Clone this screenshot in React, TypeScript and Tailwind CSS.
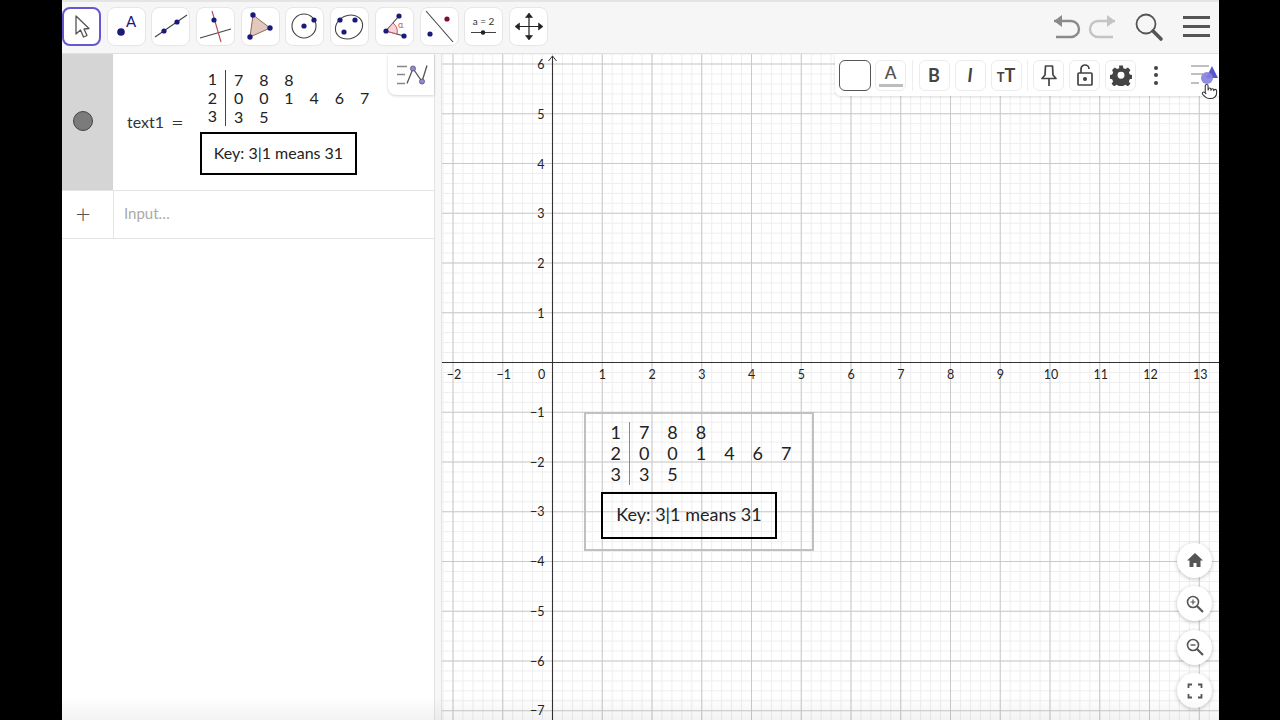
import type { ReactNode } from "react"
import { Pointer } from "lucide-react"

const NAVY = "#1a1a7a"
const ORIGIN_X = 110.5
const ORIGIN_Y = 308.5
const UNIT = 49.75

const stems = [
  { stem: "1", leaves: ["7", "8", "8"] },
  { stem: "2", leaves: ["0", "0", "1", "4", "6", "7"] },
  { stem: "3", leaves: ["3", "5"] },
]

function Dot({ x, y, r = 3.4, fill = NAVY }: { x: number; y: number; r?: number; fill?: string }) {
  return <circle cx={x} cy={y} r={r} fill={fill} />
}

const tools: ReactNode[] = [
  <path key="move" d="M14 9 L14 27 L18.5 23 L21.5 30 L25 28.5 L22 22 L27 21.5 Z" fill="white" stroke="#555" strokeWidth="1.3" strokeLinejoin="round" />,
  <g key="point">
    <Dot x={14} y={25} r={3.8} />
    <text x={19} y={20} fontSize="15" fill={NAVY}>A</text>
  </g>,
  <g key="line">
    <line x1="4" y1="30" x2="36" y2="8" stroke="#444" strokeWidth="1.1" />
    <Dot x={13} y={24} r={2.6} />
    <Dot x={26} y={15} r={2.6} />
  </g>,
  <g key="perp">
    <line x1="4" y1="31" x2="35" y2="22" stroke="#444" strokeWidth="1.1" />
    <line x1="16" y1="4" x2="25" y2="35" stroke="#b5485a" strokeWidth="1.1" />
    <Dot x={18} y={13} r={2.6} />
  </g>,
  <g key="polygon">
    <path d="M12 8 L29 21 L9 30 Z" fill="#e3c9bd" stroke="#8d6a5c" strokeWidth="1" />
    <Dot x={12} y={8} r={2.7} />
    <Dot x={29} y={21} r={2.7} />
    <Dot x={9} y={30} r={2.7} />
  </g>,
  <g key="circle">
    <circle cx="19" cy="19" r="12" fill="none" stroke="#444" strokeWidth="1.1" />
    <Dot x={19} y={19} r={2.6} />
    <Dot x={29} y={13} r={2.6} />
  </g>,
  <g key="ellipse">
    <ellipse cx="19" cy="20" rx="14" ry="11.5" transform="rotate(-25 19 20)" fill="none" stroke="#444" strokeWidth="1.1" />
    <Dot x={10} y={13} r={2.6} />
    <Dot x={25} y={13} r={2.6} />
    <Dot x={14} y={25} r={2.6} />
  </g>,
  <g key="angle">
    <path d="M24 9 L11 24 L29 29" fill="none" stroke="#444" strokeWidth="1.1" />
    <path d="M11 24 L18 16 A11 11 0 0 1 22 27 Z" fill="#f3d6d6" stroke="#c9525f" strokeWidth="1" />
    <text x={23} y={21} fontSize="9" fill="#c9525f">α</text>
    <Dot x={11} y={24} r={2.6} />
    <Dot x={24} y={9} r={2.6} />
    <Dot x={29} y={29} r={2.6} />
  </g>,
  <g key="reflect">
    <line x1="6" y1="4" x2="33" y2="35" stroke="#444" strokeWidth="1.1" />
    <Dot x={27} y={12} r={2.6} fill="#7a1030" />
    <Dot x={10} y={27} r={2.6} />
  </g>,
  <g key="slider">
    <text x={19.5} y={18} fontSize="10" fill="#333" textAnchor="middle">a = 2</text>
    <line x1="7" y1="25.5" x2="32" y2="25.5" stroke="#444" strokeWidth="1" />
    <circle cx="19" cy="25.5" r="2.3" fill="#222" />
  </g>,
  <g key="pan" stroke="#222" fill="#222">
    <path d="M20 8 V31 M8 19.5 H32" strokeWidth="1.2" />
    <path d="M20 6 L16.5 10.5 H23.5 Z M20 33 L16.5 28.5 H23.5 Z M6 19.5 L10.5 16 V23 Z M34 19.5 L29.5 16 V23 Z" strokeWidth="0.6" />
  </g>,
]

function ToolButton({ active, children }: { active?: boolean; children: ReactNode }) {
  return (
    <div
      className={
        active
          ? "h-[39px] w-[39px] shrink-0 rounded-lg border-2 border-[#6557d2] bg-white"
          : "h-[39px] w-[39px] shrink-0 rounded-lg border border-[#e6e6e6] bg-white"
      }
    >
      <svg viewBox={active ? "2 2 35 35" : "1 1 37 37"} className="h-full w-full">{children}</svg>
    </div>
  )
}

function StemLeaf({ big }: { big?: boolean }) {
  const rowClass = big ? "flex h-[21px] items-center" : "flex h-[18.5px] items-center"
  const stemClass = big
    ? "w-[29px] shrink-0 border-r border-[#888] pr-[8px] text-right leading-[21px]"
    : "w-[26px] shrink-0 border-r border-[#444] pr-[8px] text-right leading-[18.5px]"
  const leafClass = big ? "w-[28.4px] shrink-0 text-center" : "w-[25.2px] shrink-0 text-center"
  return (
    <div className={big ? "text-[18px] text-[#222]" : "text-[16px] text-[#222]"}>
      {stems.map((row) => (
        <div key={row.stem} className={rowClass}>
          <div className={stemClass}>{row.stem}</div>
          {row.leaves.map((leaf, index) => (
            <div key={index} className={leafClass}>{leaf}</div>
          ))}
        </div>
      ))}
    </div>
  )
}

function xLabelPos(v: number) {
  if (v === 0) return ORIGIN_X - 11
  if (v < 0 || v >= 10) return ORIGIN_X + v * UNIT + 1
  return ORIGIN_X + v * UNIT
}

function Graph() {
  const xs = Array.from({ length: 16 }, (_, i) => i - 2)
  const ys = Array.from({ length: 14 }, (_, i) => 6 - i)
  return (
    <svg width="777" height="666" className="block">
      {Array.from({ length: 90 }, (_, i) => i - 15).map((i) => {
        const x = ORIGIN_X + (i * UNIT) / 5
        return <line key={i} x1={x} y1="0" x2={x} y2="666" stroke="#eeeeee" />
      })}
      {Array.from({ length: 70 }, (_, i) => i - 35).map((i) => {
        const y = ORIGIN_Y + (i * UNIT) / 5
        return <line key={i} x1="0" y1={y} x2="777" y2={y} stroke="#eeeeee" />
      })}
      {xs.map((v) => {
        const x = ORIGIN_X + v * UNIT
        return <line key={v} x1={x} y1="0" x2={x} y2="666" stroke="#c9c9c9" />
      })}
      {ys.map((v) => {
        const y = ORIGIN_Y - v * UNIT
        return <line key={v} x1="0" y1={y} x2="777" y2={y} stroke="#c9c9c9" />
      })}
      <line x1={ORIGIN_X} y1="2" x2={ORIGIN_X} y2="666" stroke="#333" strokeWidth="1.1" />
      <line x1="0" y1={ORIGIN_Y} x2="777" y2={ORIGIN_Y} stroke="#333" strokeWidth="1.1" />
      <path d="M106.5 7 L110.5 2 L114.5 7" fill="none" stroke="#333" />
      {xs.filter((v) => v !== 14).map((v) => (
        <text key={v} x={xLabelPos(v)} y={ORIGIN_Y + 16} fontSize="12.5" fill="#222" textAnchor="middle">
          {v < 0 ? "−" + -v : v}
        </text>
      ))}
      {ys.filter((v) => v !== 0).map((v) => (
        <text key={v} x={ORIGIN_X - 8} y={ORIGIN_Y - v * UNIT + (v > 0 ? 5 : 4.5)} fontSize="12.5" fill="#222" textAnchor="end">
          {v < 0 ? "−" + -v : v}
        </text>
      ))}
    </svg>
  )
}

function StyleButton({ children, dark }: { children?: ReactNode; dark?: boolean }) {
  return (
    <div
      className={
        dark
          ? "flex h-[31px] w-[32px] shrink-0 items-center justify-center rounded-md border border-[#555] bg-white"
          : "flex h-[31px] w-[31px] shrink-0 items-center justify-center rounded-md border border-[#ececec] bg-white"
      }
    >
      {children}
    </div>
  )
}

function StyleBar() {
  return (
    <div className="absolute right-0 top-0 flex h-[42px] w-[384px] items-center rounded-bl-md bg-white pl-[4px] shadow-[0_1px_3px_rgba(0,0,0,0.15)]">
      <StyleButton dark />
      <div className="ml-[4px]">
        <StyleButton>
          <div className="flex flex-col items-center">
            <span className="text-[17px] font-semibold leading-[18px] text-[#555]">A</span>
            <div className="mt-[2px] h-[3px] w-[24px] bg-[#bdbdbd]" />
          </div>
        </StyleButton>
      </div>
      <div className="ml-[5.5px] mr-[6.5px] h-[31px] w-px bg-[#eeeeee]" />
      <div className="flex gap-[5px]">
        <StyleButton><span className="text-[18px] font-bold text-[#444]">B</span></StyleButton>
        <StyleButton><span className="text-[18px] font-bold italic text-[#444]">I</span></StyleButton>
        <StyleButton>
          <span className="flex items-end font-bold leading-none text-[#444]">
            <span className="text-[13px]">T</span>
            <span className="text-[18px]">T</span>
          </span>
        </StyleButton>
      </div>
      <div className="mx-[5.5px] h-[31px] w-px bg-[#eeeeee]" />
      <div className="flex gap-[5px]">
        <StyleButton>
          <svg width="20" height="24" viewBox="0 0 20 24" fill="none" stroke="#444" strokeWidth="1.7">
            <path d="M6.5 3 H13.5 L14 12 L17 15.5 H3 L6 12 Z M10 15.5 V23" strokeLinejoin="round" />
          </svg>
        </StyleButton>
        <StyleButton>
          <svg width="20" height="24" viewBox="0 0 20 24" fill="none" stroke="#444" strokeWidth="1.7">
            <rect x="3" y="10" width="14" height="12" rx="1" />
            <path d="M6 10 V6 A4 4 0 0 1 14 6" />
            <circle cx="10" cy="16" r="1.2" fill="#444" />
          </svg>
        </StyleButton>
        <StyleButton>
          <svg width="22" height="22" viewBox="0 0 24 24" fill="#444">
            <path fillRule="evenodd" d="M10 1.5h4l.6 3 2.3 1 2.6-1.7 2.8 2.8-1.7 2.6 1 2.3 3 .6v4l-3 .6-1 2.3 1.7 2.6-2.8 2.8-2.6-1.7-2.3 1-.6 3h-4l-.6-3-2.3-1-2.6 1.7-2.8-2.8 1.7-2.6-1-2.3-3-.6v-4l3-.6 1-2.3L2.3 6.6l2.8-2.8 2.6 1.7 2.3-1zM12 8.5a3.8 3.8 0 1 0 0 7.6a3.8 3.8 0 0 0 0-7.6z" />
          </svg>
        </StyleButton>
      </div>
      <div className="ml-[18px] flex flex-col gap-[3.5px]">
        <div className="h-[4px] w-[4px] rounded-full bg-[#444]" />
        <div className="h-[4px] w-[4px] rounded-full bg-[#444]" />
        <div className="h-[4px] w-[4px] rounded-full bg-[#444]" />
      </div>
      <svg width="30" height="24" viewBox="0 0 30 24" className="ml-[31px] shrink-0">
        <path d="M2 3 H20 M2 11 H14 M2 20 H10" stroke="#aaa" strokeWidth="1.6" />
        <path d="M23 3 L29 15 H17 Z" fill="#5a58c8" />
        <circle cx="18" cy="15" r="6" fill="#8480e0" fillOpacity="0.9" />
      </svg>
    </div>
  )
}

function ZoomButton({ children }: { children: ReactNode }) {
  return (
    <div className="flex h-[35px] w-[35px] items-center justify-center rounded-full bg-white shadow-[0_1px_4px_rgba(0,0,0,0.25)]">
      <svg width="20" height="20" viewBox="0 0 20 20" fill="none" stroke="#555" strokeWidth="1.6">{children}</svg>
    </div>
  )
}

export default function App() {
  return (
    <div className="relative flex h-[720px] w-[1280px] overflow-hidden bg-black pl-[62px] pr-[61px] [font-family:Lato,sans-serif]">
      <div className="flex min-w-0 flex-1 flex-col bg-white">
        <div className="flex h-[54px] shrink-0 items-center justify-between border-b border-t-2 border-b-[#e0e0e0] border-t-[#e4e4e4] bg-[#f6f6f6] pb-[2px] pr-[9px]">
          <div className="flex gap-[5.7px]">
            {tools.map((tool, index) => (
              <ToolButton key={index} active={index === 0}>{tool}</ToolButton>
            ))}
          </div>
          <div className="flex items-center">
            <svg width="30" height="26" viewBox="0 0 30 26" fill="none" stroke="#8a8a8a" strokeWidth="2.4">
              <path d="M3 7 H20 A7.5 7.5 0 0 1 20 23 H5" />
              <path d="M11 1 L3 7 L11 13 Z" fill="#8a8a8a" stroke="none" />
            </svg>
            <svg width="30" height="26" viewBox="0 0 30 26" fill="none" stroke="#c4c4c4" strokeWidth="2.4" className="ml-[7px]">
              <path d="M27 7 H10 A7.5 7.5 0 0 0 10 23 H25" />
              <path d="M19 1 L27 7 L19 13 Z" fill="#c4c4c4" stroke="none" />
            </svg>
            <svg width="30" height="30" viewBox="0 0 30 30" fill="none" stroke="#555" className="ml-[16px]">
              <circle cx="12" cy="12" r="9.5" strokeWidth="1.8" />
              <path d="M19 19 L27 27" strokeWidth="3.6" strokeLinecap="round" />
            </svg>
            <div className="ml-[19px] flex flex-col gap-[6px]">
              <div className="h-[3px] w-[27px] bg-[#555]" />
              <div className="h-[3px] w-[27px] bg-[#555]" />
              <div className="h-[3px] w-[27px] bg-[#555]" />
            </div>
          </div>
        </div>

        <div className="flex min-h-0 flex-1">
          <div className="relative w-[373px] shrink-0 border-r border-[#e4e4e4] bg-white">
            <div className="flex h-[137px] border-b border-[#e4e4e4]">
              <div className="flex w-[51px] shrink-0 items-center justify-center bg-[#d5d5d5] pb-[2px] pr-[9px]">
                <div className="h-[20px] w-[20px] rounded-full border border-[#444] bg-[#7b7b7b]" />
              </div>
              <div className="flex items-center pl-[14px]">
                <span className="flex w-[73px] shrink-0 items-center text-[16px] text-[#333]">
                  text1
                  <span className="ml-[7px] text-[22px] font-light leading-none">=</span>
                </span>
                <div className="mt-[1px] flex flex-col">
                  <StemLeaf />
                  <div className="mt-[6px] flex h-[43px] w-[157px] items-center justify-center border-2 border-black text-[16px] text-[#222]">
                    Key: 3|1 means 31
                  </div>
                </div>
              </div>
            </div>
            <div className="flex h-[48px] border-b border-[#e4e4e4]">
              <div className="flex w-[52px] shrink-0 items-center justify-center border-r border-[#e4e4e4] pb-[3px] pr-[9px] text-[26px] font-light leading-none text-[#555]">+</div>
              <span className="flex items-center pb-[2px] pl-[10px] text-[15px] text-[#aaa]">Input…</span>
            </div>
            <div className="absolute right-0 top-0 flex h-[41px] w-[46px] items-center justify-center rounded-bl-lg bg-white shadow-[0_1px_3px_rgba(0,0,0,0.18)]">
              <svg width="34" height="24" viewBox="0 0 34 24" fill="none">
                <path d="M3 3.5 H13 M3 11.5 H11 M3 20.5 H11" stroke="#888" strokeWidth="1.6" />
                <path d="M13 20.5 L19 5.5 L28 18.5 L33 2.5" stroke="#555" strokeWidth="1.3" />
                <circle cx="19" cy="5.5" r="2.6" fill="#8a86d8" stroke="#444" strokeWidth=".6" />
                <circle cx="28" cy="18.5" r="2.6" fill="#8a86d8" stroke="#444" strokeWidth=".6" />
              </svg>
            </div>
          </div>
          <div className="w-[7px] shrink-0 border-r border-[#e4e4e4] bg-[#f7f7f7]" />
          <div className="relative min-w-0 flex-1 overflow-hidden">
            <Graph />
            <div className="absolute left-[142px] top-[358px] h-[139px] w-[230px] border-2 border-[#c0c0c0] pl-[15px] pt-[8px]">
              <StemLeaf big />
              <div className="mt-[7px] flex h-[47px] w-[176px] items-center justify-center border-2 border-black pb-[2px] text-[18px] text-[#222]">
                Key: 3|1 means 31
              </div>
            </div>
            <StyleBar />
            <Pointer className="absolute right-[1px] top-[29px] h-[17px] w-[17px] fill-white text-[#333]" strokeWidth={1.5} />
            <div className="absolute bottom-[12px] right-[7px] flex flex-col gap-[8.5px]">
              <ZoomButton>
                <path d="M10 3 L18 10.5 H15.5 V17 H11.5 V13 H8.5 V17 H4.5 V10.5 H2 Z" fill="#555" stroke="none" />
              </ZoomButton>
              <ZoomButton>
                <circle cx="8" cy="8" r="5.5" />
                <path d="M12 12 L18 18" strokeWidth="2.2" />
                <path d="M8 5.5 V10.5 M5.5 8 H10.5" strokeWidth="1.2" />
              </ZoomButton>
              <ZoomButton>
                <circle cx="8" cy="8" r="5.5" />
                <path d="M12 12 L18 18" strokeWidth="2.2" />
                <path d="M5.5 8 H10.5" strokeWidth="1.4" />
              </ZoomButton>
              <ZoomButton>
                <path d="M3.5 7 V3.5 H7 M13 3.5 H16.5 V7 M16.5 13 V16.5 H13 M7 16.5 H3.5 V13" strokeWidth="1.8" />
              </ZoomButton>
            </div>
          </div>
        </div>
      </div>
      <div className="pointer-events-none absolute bottom-0 left-[62px] right-[61px] h-[24px] bg-gradient-to-t from-black/5 to-transparent" />
    </div>
  )
}
